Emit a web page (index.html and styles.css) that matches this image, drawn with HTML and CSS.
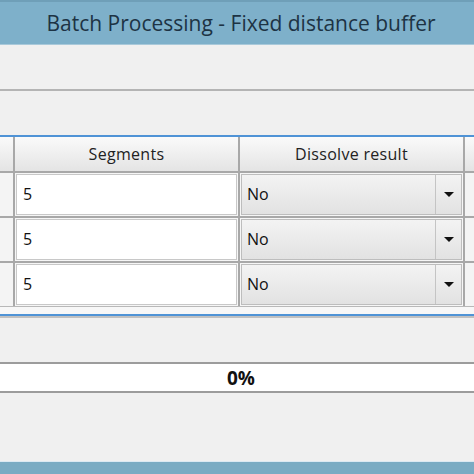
FILE: index.html
```html
<!DOCTYPE html>
<html lang="en">
<head>
    <meta charset="UTF-8">
    <title>Batch Processing - Fixed distance buffer</title>
    <link rel="stylesheet" href="styles.css">
</head>
<body>
    <div class="title-bar">Batch Processing - Fixed distance buffer</div>

    <div class="panel panel-top"></div>
    <div class="panel panel-mid"></div>

    <div class="table-frame">
        <div class="table">
            <div class="head-cell"></div>
            <div class="head-cell">Segments</div>
            <div class="head-cell">Dissolve result</div>
            <div class="head-cell"></div>

            <div class="side-cell"></div>
            <div class="cell"><div class="edit">5</div></div>
            <div class="cell"><div class="combo"><span class="combo-text">No</span><span class="combo-arrow"></span></div></div>
            <div class="side-cell"></div>

            <div class="side-cell"></div>
            <div class="cell"><div class="edit">5</div></div>
            <div class="cell"><div class="combo"><span class="combo-text">No</span><span class="combo-arrow"></span></div></div>
            <div class="side-cell"></div>

            <div class="side-cell"></div>
            <div class="cell"><div class="edit">5</div></div>
            <div class="cell"><div class="combo"><span class="combo-text">No</span><span class="combo-arrow"></span></div></div>
            <div class="side-cell"></div>
        </div>
    </div>

    <div class="panel panel-low"></div>
    <div class="progress">0%</div>
    <div class="panel panel-bottom"></div>
    <div class="status-strip"></div>
</body>
</html>
```

FILE: styles.css
```css
* {
    margin: 0;
    padding: 0;
    box-sizing: border-box;
    font-family: "Open Sans", "Noto Sans", "DejaVu Sans", sans-serif;
}

html, body {
    width: 100%;
    height: 100%;
    overflow: hidden;
}

body {
    background: #f0f0f0;
    color: #111;
}

.title-bar {
    height: 45px;
    background: #7eb0ca;
    border-top: 2px solid #6f9fb8;
    border-bottom: 1px solid #a9c9da;
    color: #1d3344;
    font-size: 21px;
    text-align: center;
    line-height: 42px;
    padding-left: 8px;
}

.panel {
    background: #f0f0f0;
}

.panel-top {
    height: 46px;
    border-bottom: 2px solid #b4b4b4;
}

.panel-mid {
    height: 44px;
}

.table-frame {
    border-top: 2px solid #4f93d6;
    border-bottom: 2px solid #4f93d6;
    background: #f7f7f7;
    padding-bottom: 7px;
}

.table {
    display: grid;
    grid-template-columns: 13px 223px 223px 1fr;
    grid-template-rows: 34px repeat(3, 43px);
    gap: 2px;
    background: #a8a8a8;
    border-bottom: 1px solid #b8b8b8;
}

.head-cell {
    background: linear-gradient(#fafafa, #e4e4e4);
    font-size: 16px;
    letter-spacing: 0.3px;
    text-align: center;
    line-height: 34px;
    color: #222;
}

.side-cell {
    background: #f4f4f4;
}

.cell {
    background: #f6f6f6;
    padding: 1px;
}

.edit {
    height: 100%;
    background: #fff;
    border: 1px solid #c8c8c8;
    font-size: 16px;
    line-height: 39px;
    padding-left: 6px;
}

.combo {
    height: 100%;
    display: flex;
    border: 1px solid #bdbdbd;
    background: linear-gradient(#f3f3f3, #e2e2e2);
}

.combo-text {
    flex: 1;
    font-size: 16px;
    line-height: 39px;
    padding-left: 5px;
    border-right: 1px solid #c4c4c4;
}

.combo-arrow {
    width: 25px;
    display: flex;
    align-items: center;
    justify-content: center;
}

.combo-arrow::after {
    content: "";
    border-left: 5px solid transparent;
    border-right: 5px solid transparent;
    border-top: 5px solid #111;
}

.panel-low {
    height: 48px;
    border-top: 2px solid #c0c0c0;
    border-bottom: 2px solid #9c9c9c;
}

.progress {
    height: 29px;
    background: #fff;
    text-align: center;
    font-size: 19px;
    font-weight: 700;
    line-height: 29px;
    padding-left: 8px;
    border-bottom: 2px solid #9c9c9c;
}

.panel-bottom {
    height: 69px;
    border-bottom: 1px solid #dce9f2;
}

.status-strip {
    height: 12px;
    background: #7aabc3;
}
```
